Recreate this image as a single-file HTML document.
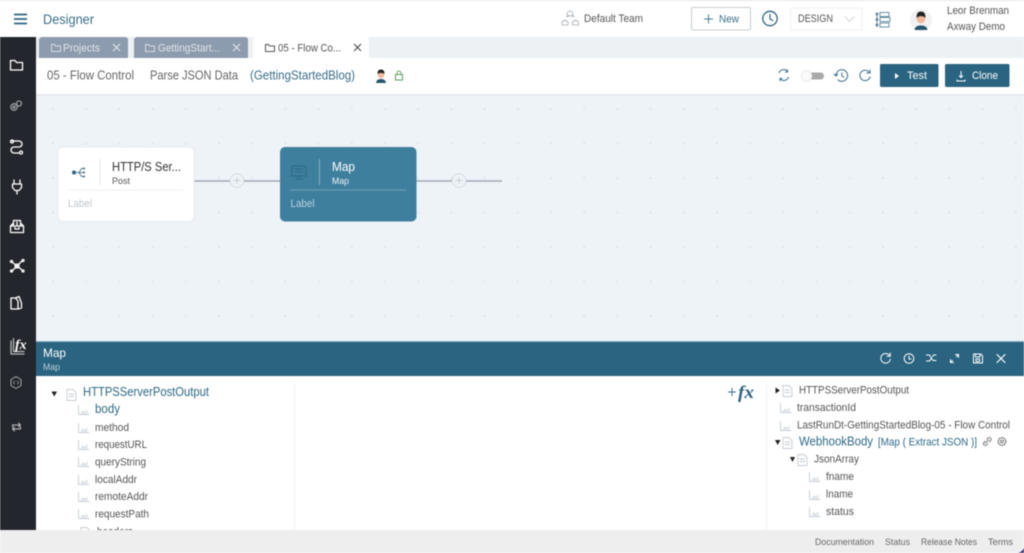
<!DOCTYPE html>
<html><head><meta charset="utf-8"><style>
html,body{margin:0;padding:0;background:#fff;width:1024px;height:553px;overflow:hidden}
svg{display:block;filter:blur(.5px)}
text{font-family:"Liberation Sans",sans-serif;font-size:11px;fill:#555}
.ic{fill:none;stroke:#fff;stroke-width:1.3;stroke-linecap:round;stroke-linejoin:round}
.dk{fill:none;stroke:#2f6480;stroke-width:1.2;stroke-linecap:round;stroke-linejoin:round}
.gr{fill:none;stroke:#c6ccd2;stroke-width:.9;stroke-linejoin:round;stroke-linecap:round}
</style></head><body>
<svg width="1024" height="553" viewBox="0 0 1024 553" xmlns="http://www.w3.org/2000/svg">
<defs>
<pattern id="d" x="52" y="108" width="33.2" height="34.5" patternUnits="userSpaceOnUse"><circle cx="1" cy="1" r="1.1" fill="#dfe4e9"/></pattern>
<g id="leaf"><path class="gr" d="M.5 .5V9.500H11"/><path d="M2.500 8L5 5L7 7L9.500 4V8.500H2.500Z" fill="#dde2e7"/></g>
<g id="doc"><path class="gr" d="M1 .5H7L10 3.500V11.500H1ZM3 5H8M3 7.500H8"/></g>
<g id="fold"><path d="M.5 1.500H3.500L4.500 3H9.500V8.500H.5Z" fill="none" stroke-width="1"/></g>
</defs>
<rect width="1024" height="553" fill="#fff"/>
<rect y="0" width="1024" height="1" fill="#e6e6e6"/>
<!-- tab strip -->
<rect y="37" width="1024" height="21" fill="#edf1f3"/>
<!-- toolbar -->
<rect x="36" y="58" width="988" height="36" fill="#fff"/>
<rect x="36" y="94" width="988" height="248" fill="#eef3f8"/>
<rect x="36" y="94" width="988" height="2" fill="#e5e9ed"/>
<rect x="36" y="96" width="988" height="246" fill="url(#d)"/>
<!-- header -->
<g stroke="#2f6480" stroke-width="1.700"><path d="M14 14.500H27M14 19H27M14 23.500H27"/></g>
<text x="43" y="24" style="font-size:13.500px;fill:#3b6f8a" textLength="51" lengthAdjust="spacingAndGlyphs">Designer</text>
<g style="stroke:#a3aab0;fill:none;stroke-width:.8"><path d="M570 10.500l3 2.500v3h-6v-3zM565 20l3 2v3h-6v-3zM575.500 20l3 2v3h-6v-3zM566.500 17l3-2M574.500 17l-3-2"/></g>
<text x="584" y="22" style="font-size:11px;fill:#555" textLength="59" lengthAdjust="spacingAndGlyphs">Default Team</text>
<rect x="691.500" y="7.500" width="59" height="22.500" rx="1.500" fill="#fff" stroke="#c8ced3"/>
<path d="M704 19H713M708.500 14.500V23.500" stroke="#4b7890" stroke-width="1" fill="none"/>
<text x="719" y="22.500" style="font-size:11px;fill:#3b6f8a" textLength="20" lengthAdjust="spacingAndGlyphs">New</text>
<circle cx="770" cy="18.500" r="7.200" fill="none" stroke="#2f6480" stroke-width="1.300"/><path d="M770 14.500V19L772.800 20.500" class="dk"/>
<rect x="790.500" y="8" width="71.500" height="22" rx="1.500" fill="#fff" stroke="#edf0f2"/>
<text x="798" y="22" style="font-size:11px;fill:#555" textLength="35" lengthAdjust="spacingAndGlyphs">DESIGN</text>
<path d="M845 16.500L849.500 21.500L854 16.500" fill="none" stroke="#d3d7db" stroke-width="1"/>
<g fill="none" stroke="#5c8499" stroke-width=".9"><rect x="880" y="12.500" width="9" height="4"/><rect x="880" y="17.500" width="10" height="4"/><rect x="880" y="23" width="9" height="4"/><path d="M877 13V27"/><circle cx="877" cy="14" r="1"/><circle cx="877" cy="19.500" r="1"/><circle cx="877" cy="25" r="1"/></g>
<circle cx="921" cy="20" r="11" fill="#f1f2f3"/>
<circle cx="921" cy="19" r="4.300" fill="#f2b79a"/><path d="M916.500 18c0-4 1-6.500 4.500-6.500s4.500 2.500 4.500 6.500c-2-2.500-7-2.500-9 0z" fill="#222"/><path d="M914.500 30c.5-3.500 3-4.500 6.500-4.500s6 1 6.500 4.500z" fill="#25566d"/>
<text x="947" y="14" style="font-size:11px;fill:#555" textLength="62" lengthAdjust="spacingAndGlyphs">Leor Brenman</text>
<text x="947" y="30" style="font-size:11px;fill:#555" textLength="58" lengthAdjust="spacingAndGlyphs">Axway Demo</text>
<!-- tabs -->
<path d="M39 58V40a3 3 0 0 1 3-3H125a3 3 0 0 1 3 3V58Z" fill="#8d9bae"/>
<path d="M134 58V40a3 3 0 0 1 3-3H245a3 3 0 0 1 3 3V58Z" fill="#8d9bae"/>
<path d="M253 58V40a3 3 0 0 1 3-3H366a3 3 0 0 1 3 3V58Z" fill="#fff"/>
<use href="#fold" x="51" y="43" stroke="#d5dbe2"/><use href="#fold" x="145" y="43" stroke="#d5dbe2"/><use href="#fold" x="265" y="43" stroke="#555"/>
<text x="63" y="51.500" style="font-size:11px;fill:#dfe4ea" textLength="37" lengthAdjust="spacingAndGlyphs">Projects</text>
<text x="158" y="51.500" style="font-size:11px;fill:#dfe4ea" textLength="62" lengthAdjust="spacingAndGlyphs">GettingStart...</text>
<text x="278" y="51.500" style="font-size:11px;fill:#555" textLength="63" lengthAdjust="spacingAndGlyphs">05 - Flow Co...</text>
<path d="M113 44L120 51M120 44L113 51M233 44L240 51M240 44L233 51" stroke="#e6eaee" stroke-width="1" fill="none"/>
<path d="M354 44L361 51M361 44L354 51" stroke="#444" stroke-width="1" fill="none"/>
<!-- breadcrumb -->
<text x="47" y="79.500" style="font-size:12.500px;fill:#666" textLength="87" lengthAdjust="spacingAndGlyphs">05 - Flow Control</text>
<text x="150" y="79.500" style="font-size:12.500px;fill:#666" textLength="88" lengthAdjust="spacingAndGlyphs">Parse JSON Data</text>
<text x="250" y="79.500" style="font-size:12.500px;fill:#3b6f8a" textLength="105" lengthAdjust="spacingAndGlyphs">(GettingStartedBlog)</text>
<circle cx="381" cy="75" r="3.300" fill="#f2b79a"/><path d="M377.500 74c0-3 1-4.500 3.500-4.500s3.500 1.500 3.500 4.500c-2-1.500-5-1.500-7 0z" fill="#222"/><path d="M376 83c.3-3 2.500-4 5-4s4.700 1 5 4z" fill="#25566d"/>
<rect x="395.500" y="74.500" width="7" height="5.500" fill="none" stroke="#6aa56b" stroke-width="1.100"/><path d="M397 74.500v-1.500a2 2 0 0 1 4 0v1.500" fill="none" stroke="#6aa56b"/>
<!-- toolbar right -->
<path d="M779 73a4.800 4.800 0 0 1 8.500-1.500M788.500 77a4.800 4.800 0 0 1-8.500 1.500M787.500 69.500v2.500h-2.500M780 81v-2.500h2.500" fill="none" stroke="#3d6f88" stroke-width="1"/>
<rect x="803" y="72.500" width="21" height="7" rx="3.500" fill="#a9a9a9"/><circle cx="806.500" cy="76" r="5.300" fill="#fafafa" stroke="#e9e9e9" stroke-width=".6"/>
<path d="M836 75.500a5.800 5.800 0 1 1 1.700 4.100M833.800 73.800L836 76L838 73.800M841.800 72.500V76L844.300 77.500" fill="none" stroke="#3d6f88" stroke-width="1"/>
<path d="M869.300 72.300a5.200 5.200 0 1 0 .9 4.200M870 69.500V73H866.500" fill="none" stroke="#3d6f88" stroke-width="1"/>
<rect x="880" y="64" width="58.500" height="23" rx="1.500" fill="#2a6480"/>
<rect x="945" y="64" width="64.500" height="23" rx="1.500" fill="#2a6480"/>
<path d="M895 73L899 76L895 79Z" fill="#fff"/>
<text x="907" y="79" style="font-size:11px;fill:#fff" textLength="20" lengthAdjust="spacingAndGlyphs">Test</text>
<path d="M961 71V77M959 75.500L961 77.500L963 75.500M957 79.500V81H965V79.500" fill="none" stroke="#fff" stroke-width="1"/>
<text x="972" y="79" style="font-size:11px;fill:#fff" textLength="26" lengthAdjust="spacingAndGlyphs">Clone</text>
<!-- connectors -->
<path d="M194 181H280M416 181H502" stroke="#9ea9b3" stroke-width="1.500"/>
<circle cx="237" cy="180.500" r="6.800" fill="#eef3f8" stroke="#d4dbe1" stroke-width="1"/><path d="M233.500 180.500H240.500M237 177V184" stroke="#c5ced6" stroke-width=".9"/>
<circle cx="459" cy="180.500" r="6.800" fill="#eef3f8" stroke="#d4dbe1" stroke-width="1"/><path d="M455.500 180.500H462.500M459 177V184" stroke="#c5ced6" stroke-width=".9"/>
<!-- node 1 -->
<rect x="58" y="147" width="136" height="74.500" rx="5" fill="#fff" stroke="#e6ebef"/>
<circle cx="74" cy="172.500" r="2" fill="#2f6480"/><path d="M76 172.500H79L81.500 168.500H84M79 172.500H84M79 172.500L81.500 176.500H84" fill="none" stroke="#2f6480" stroke-width=".8"/><circle cx="84" cy="168.500" r="1" fill="#2f6480"/><circle cx="84" cy="172.500" r="1" fill="#2f6480"/><circle cx="84" cy="176.500" r="1" fill="#2f6480"/>
<path d="M100 159V185" stroke="#dfe3e6"/><path d="M68 190H184" stroke="#eef0f2"/>
<text x="112" y="171" style="font-size:12.500px;fill:#333" textLength="69" lengthAdjust="spacingAndGlyphs">HTTP/S Ser...</text>
<text x="112" y="184" style="font-size:9.500px;fill:#555" textLength="18" lengthAdjust="spacingAndGlyphs">Post</text>
<text x="68" y="207" style="font-size:11px;fill:#c2c6ca" textLength="24" lengthAdjust="spacingAndGlyphs">Label</text>
<!-- node 2 -->
<rect x="280" y="147" width="136.500" height="74.500" rx="5" fill="#3f7f9e"/>
<g fill="none" stroke="#2d6985" stroke-width="1"><rect x="292" y="166" width="14" height="10"/><path d="M294.500 169H303.500M294.500 172H303.500M295 179H303M299 176V179"/></g>
<path d="M319.500 159V185" stroke="#86aec1"/><path d="M290 190H406.500" stroke="#6f9fb5"/>
<text x="332" y="171" style="font-size:12.500px;fill:#fff" textLength="23" lengthAdjust="spacingAndGlyphs">Map</text>
<text x="332" y="184" style="font-size:9.500px;fill:#eaf2f5" textLength="17" lengthAdjust="spacingAndGlyphs">Map</text>
<text x="290.500" y="207" style="font-size:11px;fill:#b9d2de" textLength="24" lengthAdjust="spacingAndGlyphs">Label</text>
<!-- bottom panel -->
<rect x="36" y="342" width="988" height="34" fill="#2a6480"/>
<rect x="36" y="341" width="988" height="1" fill="#8fb0c1"/>
<text x="43" y="357" style="font-size:12px;fill:#fff" textLength="23" lengthAdjust="spacingAndGlyphs">Map</text>
<text x="43" y="370" style="font-size:9px;fill:#b8cfda" textLength="17" lengthAdjust="spacingAndGlyphs">Map</text>
<g class="ic" style="stroke-width:1">
<path d="M889.500 355.500a4.800 4.800 0 1 0 .8 3.800M890.200 353V356.200H887"/>
<circle cx="909" cy="358.500" r="4.800"/><path d="M909 356V359H911"/>
<path d="M926.500 355H929.500L933 360.500H936M926.500 361H929.500L931 358.800M932.500 356.500L933.500 355H936"/>
<path d="M950.500 362.500L952.500 360.500M956.500 356.500L958.500 354.500M955.500 354.500H958.500V357.500M950.500 359.500V362.500H953.500"/>
<path d="M973.500 354H980.800L982.500 355.700V363H973.500ZM975.500 354V357H980V354"/><rect x="976" y="359" width="3.500" height="2.500"/>
<path d="M997 354.500L1005 362.500M1005 354.500L997 362.500" style="stroke-width:1.200"/>
</g>
<path d="M294.500 384V530M766.500 384V530" stroke="#eef0f1" stroke-width="1"/>
<!-- left tree -->
<path d="M51.500 391.500H57L54.200 396.500Z" fill="#222"/>
<use href="#doc" x="66" y="389"/>
<text x="83" y="396" style="font-size:12.500px;fill:#2f6a88" textLength="126" lengthAdjust="spacingAndGlyphs">HTTPSServerPostOutput</text>
<use href="#leaf" x="78" y="405"/><text x="95" y="413" style="font-size:13px;fill:#2f6a88" textLength="25" lengthAdjust="spacingAndGlyphs">body</text>
<use href="#leaf" x="78" y="423"/><text x="95" y="431" style="font-size:11px;fill:#555" textLength="34" lengthAdjust="spacingAndGlyphs">method</text>
<use href="#leaf" x="78" y="440"/><text x="95" y="448" style="font-size:11px;fill:#555" textLength="52" lengthAdjust="spacingAndGlyphs">requestURL</text>
<use href="#leaf" x="78" y="457"/><text x="95" y="465.500" style="font-size:11px;fill:#555" textLength="51" lengthAdjust="spacingAndGlyphs">queryString</text>
<use href="#leaf" x="78" y="475"/><text x="95" y="483" style="font-size:11px;fill:#555" textLength="42" lengthAdjust="spacingAndGlyphs">localAddr</text>
<use href="#leaf" x="78" y="492"/><text x="95" y="500" style="font-size:11px;fill:#555" textLength="53" lengthAdjust="spacingAndGlyphs">remoteAddr</text>
<use href="#leaf" x="78" y="509"/><text x="95" y="517.500" style="font-size:11px;fill:#555" textLength="54" lengthAdjust="spacingAndGlyphs">requestPath</text>
<use href="#doc" x="80" y="527"/><text x="97" y="535" style="font-size:11px;fill:#555" textLength="36" lengthAdjust="spacingAndGlyphs">headers</text>
<!-- fx -->
<path d="M728 392H736M732 388V396" stroke="#3d6f88" stroke-width="1"/>
<text x="738" y="398" style="font-family:'Liberation Serif',serif;font-size:18px;font-style:italic;font-weight:bold;fill:#2f6480" textLength="16" lengthAdjust="spacingAndGlyphs">fx</text>
<!-- right tree -->
<path d="M775.500 387.500L780 390.500L775.500 393.500Z" fill="#222"/>
<use href="#doc" x="782" y="385"/>
<text x="799" y="393.500" style="font-size:11px;fill:#555" textLength="110" lengthAdjust="spacingAndGlyphs">HTTPSServerPostOutput</text>
<use href="#leaf" x="780" y="403"/><text x="797" y="411" style="font-size:11px;fill:#555" textLength="59" lengthAdjust="spacingAndGlyphs">transactionId</text>
<use href="#leaf" x="780" y="421"/><text x="797" y="428.500" style="font-size:11px;fill:#555" textLength="213" lengthAdjust="spacingAndGlyphs">LastRunDt-GettingStartedBlog-05 - Flow Control</text>
<path d="M775 440H780.500L777.700 445Z" fill="#222"/>
<use href="#doc" x="782" y="437"/>
<text x="799" y="445.500" style="font-size:13px;fill:#2f6a88" textLength="74" lengthAdjust="spacingAndGlyphs">WebhookBody</text>
<text x="878" y="445.500" style="font-size:11px;fill:#2f6a88" textLength="99" lengthAdjust="spacingAndGlyphs">[Map ( Extract JSON )]</text>
<path d="M985 443.500L989 439.500M986.500 439.500l1.500-1.500a1.800 1.800 0 0 1 2.600 2.600l-1.500 1.500M988 443.500l-1.500 1.500a1.800 1.800 0 0 1-2.600-2.600l1.500-1.500" fill="none" stroke="#555" stroke-width=".8"/>
<circle cx="1002" cy="441.500" r="3.800" fill="none" stroke="#555" stroke-width="1.100" stroke-dasharray="1.800 .6"/><circle cx="1002" cy="441.500" r="1.400" fill="none" stroke="#555" stroke-width=".8"/>
<path d="M790 457H795L792.500 462Z" fill="#222"/>
<use href="#doc" x="797" y="454"/>
<text x="814" y="462.500" style="font-size:11px;fill:#555" textLength="45" lengthAdjust="spacingAndGlyphs">JsonArray</text>
<use href="#leaf" x="809" y="472"/><text x="826" y="480" style="font-size:11px;fill:#555" textLength="28" lengthAdjust="spacingAndGlyphs">fname</text>
<use href="#leaf" x="809" y="490"/><text x="826" y="497.500" style="font-size:11px;fill:#555" textLength="27" lengthAdjust="spacingAndGlyphs">lname</text>
<use href="#leaf" x="809" y="507"/><text x="826" y="515" style="font-size:11px;fill:#555" textLength="28" lengthAdjust="spacingAndGlyphs">status</text>
<!-- footer -->
<rect y="530" width="1024" height="23" fill="#eeeeee"/>
<text x="815" y="545" style="font-size:9.500px;fill:#666" textLength="59" lengthAdjust="spacingAndGlyphs">Documentation</text>
<text x="885" y="545" style="font-size:9.500px;fill:#666" textLength="25" lengthAdjust="spacingAndGlyphs">Status</text>
<text x="921" y="545" style="font-size:9.500px;fill:#666" textLength="56" lengthAdjust="spacingAndGlyphs">Release Notes</text>
<text x="988" y="545" style="font-size:9.500px;fill:#666" textLength="25" lengthAdjust="spacingAndGlyphs">Terms</text>
<path d="M1024 548V553H1018Q1022 552 1024 548Z" fill="#3a2a6a"/>
<!-- sidebar -->
<rect y="37" width="36" height="493" fill="#23262c"/>
<g class="ic">
<path d="M10.500 60.500H15L16.500 62.500H22.500V70H10.500Z"/>
<g style="stroke:#9a9da1"><circle cx="14" cy="107" r="3.200"/><circle cx="19" cy="103.500" r="2.500"/><circle cx="14" cy="107" r="1"/></g>
<path d="M12 141H19a2.500 2.500 0 0 1 0 6H14a2.500 2.500 0 0 0 0 6H19"/><circle cx="12" cy="141.500" r="1.500"/><circle cx="21" cy="152.500" r="1.500"/>
<path d="M14 180V184M20 180V184M12.500 184H21.500V187.500L19 190.500H15L12.500 187.500ZM17 190.500V194"/>
<path d="M13.500 226V220.500H20.500V226M10.500 226H23.500V232.500H10.500ZM10.500 226L13.500 223M23.500 226L20.500 223M15 227.500V229H19V227.500M17 222V226"/>
<path d="M12 262L22 270M22 261L12 271"/><circle cx="17" cy="266" r="2"/><circle cx="11.500" cy="261.500" r="1"/><circle cx="23" cy="260.500" r="1"/><circle cx="11.500" cy="271" r="1"/><circle cx="23" cy="271" r="1"/>
<path d="M11 298H15.500L18 301V309H11ZM15.500 298L19 296.500L21.500 303V308L18 309"/>
<path d="M11 341V354H24M13.500 338.500V351.500H24" style="stroke:#b5b8bb"/>
<text x="15" y="349" style="font-family:'Liberation Serif',serif;font-size:14px;font-style:italic;font-weight:bold;fill:#fff;stroke:none">fx</text>
<path d="M16 376.500L21 379.500V385.500L16 388.500L11 385.500V379.500Z" style="stroke:#a6a9ad;stroke-width:1"/>
<path d="M14.500 381L13.500 382.500L14.500 384M17.500 381L18.500 382.500L17.500 384" style="stroke:#a6a9ad;stroke-width:.7"/>
<path d="M12.500 427V425H20.500M18.500 423L20.500 425L18.500 427M20.500 427V429H12.500M14.500 427L12.500 429L14.500 431" style="stroke:#c2c4c7;stroke-width:1"/>
</g>
</svg>
</body></html>
